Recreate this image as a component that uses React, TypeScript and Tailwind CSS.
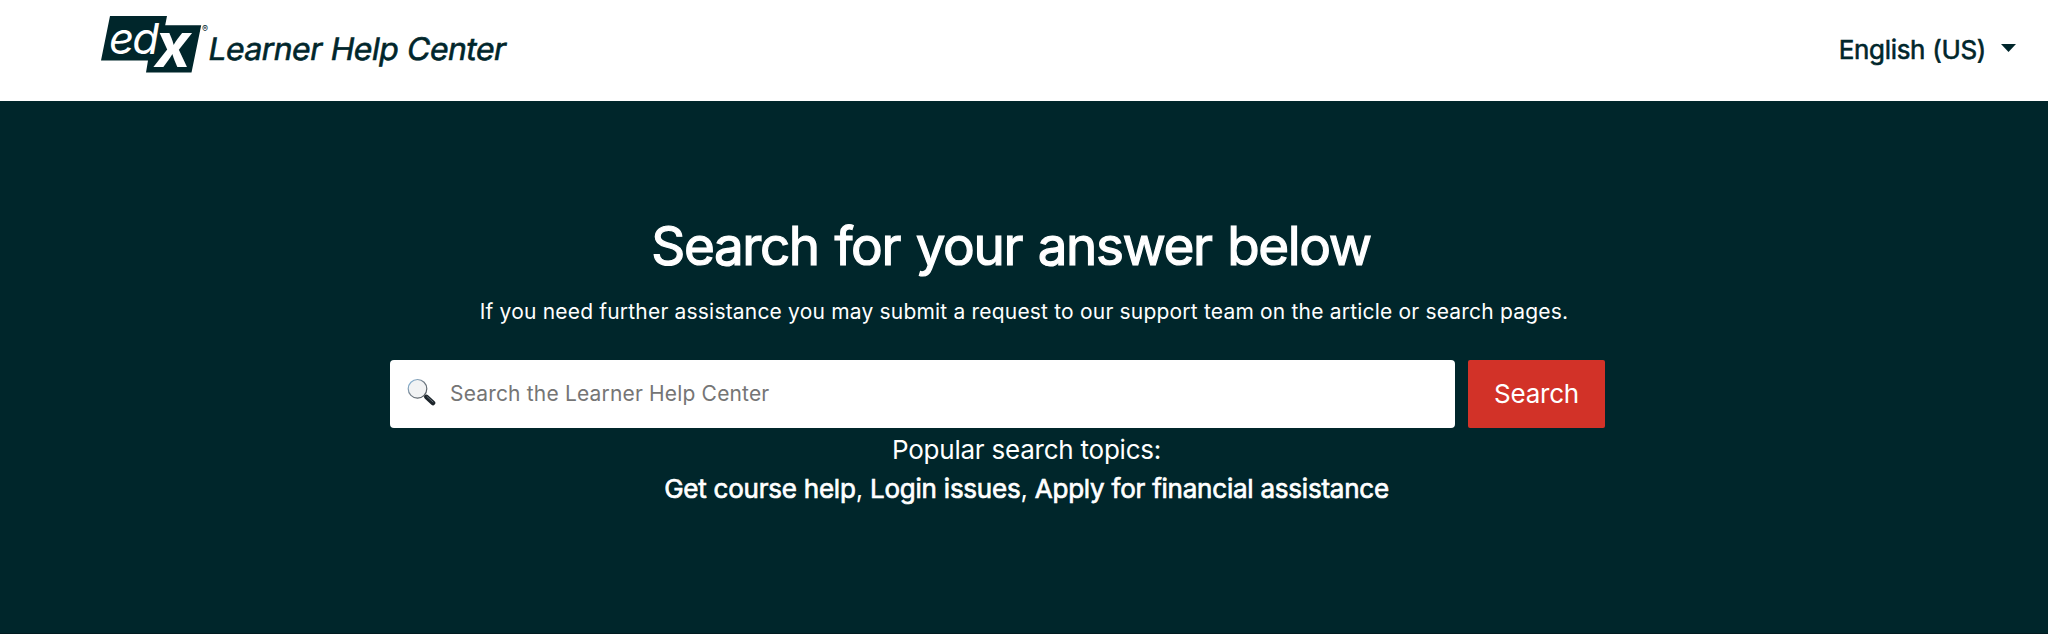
const popularTopics = ['Get course help', 'Login issues', 'Apply for financial assistance']

export default function App() {
  return (
    <div className="flex h-[634px] w-full flex-col bg-[#00262b] font-[Inter,sans-serif]">
      <Header />
      <main className="flex flex-1 flex-col border-b border-[#001b20] pt-[113px] text-white">
        <h1 className="w-[2022px] text-center text-[53px] leading-[64px] font-normal tracking-[-1.4px] [word-spacing:2.2px] [-webkit-text-stroke:1.2px_white]">
          Search for your answer below
        </h1>
        <p className="mt-[18px] w-[2048px] text-center text-[21px] leading-[32px] tracking-[0.19px]">
          If you need further assistance you may submit a request to our support team on the article or
          search pages.
        </p>
        <SearchForm />
        <div className="w-[2053px] pt-[3px] text-center text-[26px] leading-[38.500px] tracking-[-0.23px]">
          <p>Popular search topics:</p>
          <p>
            {popularTopics.map((topic, i) => (
              <span key={topic}>
                {i > 0 && ', '}
                <a href="#" className="[-webkit-text-stroke:0.7px_white]">
                  {topic}
                </a>
              </span>
            ))}
          </p>
        </div>
      </main>
    </div>
  )
}

function Header() {
  return (
    <header className="flex h-[101px] shrink-0 items-start justify-between bg-white pr-[32px] pl-[100px] text-[#00262b]">
      <a href="#" aria-label="edX Learner Help Center">
        <Logo />
      </a>
      <button className="mt-[31px] flex items-center gap-[15px] text-[26px] leading-[38px] tracking-[-0.3px] [-webkit-text-stroke:0.6px_#00262b]">
        <span>English (US)</span>
        <svg width="15" height="8" viewBox="0 0 15 8" className="-mt-[4px]" aria-hidden="true">
          <path d="M0 0H15L7.5 8Z" fill="currentColor" />
        </svg>
      </button>
    </header>
  )
}

function Logo() {
  return (
    <svg width="420" height="90" viewBox="100 0 420 90" fill="#00262b">
      <path d="M110 16H167L165.200 25.300H201.200L191.500 72.500H146L148 60.600H101Z" />
      <text
        x="109"
        y="54.300"
        fontSize="43"
        fontStyle="italic"
        fill="#fff"
        letterSpacing="-2"
        textLength="48"
        lengthAdjust="spacingAndGlyphs"
      >
        ed
      </text>
      <text
        x="155"
        y="66.500"
        fontSize="63"
        fontWeight="700"
        fontStyle="italic"
        fill="#fff"
        textLength="36"
        lengthAdjust="spacingAndGlyphs"
      >
        x
      </text>
      <text x="202" y="32" fontSize="9">
        ®
      </text>
      <text
        transform="translate(207 60.200) skewX(-10)"
        fontSize="31"
        stroke="#00262b"
        strokeWidth="0.600"
        letterSpacing="-0.500"
        wordSpacing="0.500"
        textLength="297"
        lengthAdjust="spacingAndGlyphs"
      >
        Learner Help Center
      </text>
    </svg>
  )
}

function SearchForm() {
  return (
    <form className="mt-[32px] ml-[390px] flex h-[68px] gap-[13px]">
      <label className="flex w-[1065px] items-center rounded-[4px] bg-white pl-[16px]">
        <MagnifierIcon />
        <input
          type="text"
          placeholder="Search the Learner Help Center"
          className="ml-[14px] flex-1 bg-transparent text-[21px] tracking-[0.17px] text-black outline-none placeholder:text-[#757575]"
        />
      </label>
      <button type="button" className="w-[137px] rounded-[2px] bg-[#d23228] pb-[2px] text-[26px] tracking-[-0.25px] text-white">
        Search
      </button>
    </form>
  )
}

function MagnifierIcon() {
  return (
    <svg width="30" height="30" viewBox="0 0 30 30" className="-mt-[2px]" aria-hidden="true">
      <defs>
        <linearGradient id="rim" x1="0" y1="0" x2="1" y2="1">
          <stop offset="0" stopColor="#8fc4ec" />
          <stop offset="0.45" stopColor="#77828c" />
          <stop offset="1" stopColor="#4a4f54" />
        </linearGradient>
      </defs>
      <path d="M18 17L21 20" stroke="#777" strokeWidth="2.500" />
      <path d="M20.500 19L27 25" stroke="#1c242a" strokeWidth="4.600" strokeLinecap="round" />
      <path d="M21 18.500L27 24" stroke="#65717a" strokeWidth="1" strokeLinecap="round" />
      <circle cx="11.500" cy="10.800" r="9.300" fill="#f2f3f4" stroke="url(#rim)" strokeWidth="1.200" />
    </svg>
  )
}
